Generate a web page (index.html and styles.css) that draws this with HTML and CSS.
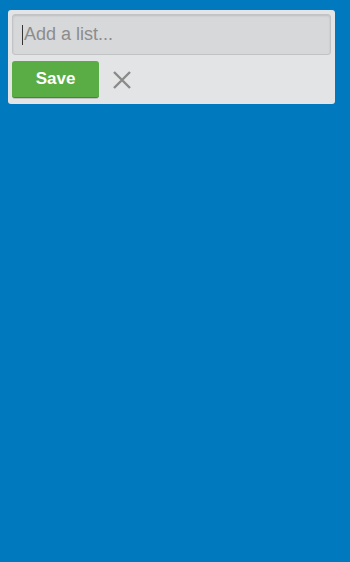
FILE: index.html
```html
<!DOCTYPE html>
<html lang="en">
<head>
<meta charset="utf-8">
<title>Add a list</title>
<link rel="stylesheet" href="styles.css">
</head>
<body>
<div class="board">
  <form class="add-list">
    <div class="list-input"><span class="caret"></span><span class="placeholder">Add a list...</span></div>
    <div class="controls">
      <button type="button" class="save">Save</button>
      <button type="button" class="cancel" aria-label="Cancel">
        <svg width="20" height="20" viewBox="0 0 20 20"><path d="M2 2 L18 18 M18 2 L2 18" stroke="#8a8a8a" stroke-width="2.4" fill="none"/></svg>
      </button>
    </div>
  </form>
</div>
</body>
</html>
```
FILE: styles.css
```css
html, body {
  margin: 0;
  padding: 0;
  height: 100%;
}
body {
  background: #0079bf;
  font-family: "Liberation Sans", Arial, sans-serif;
}
.board {
  padding: 10px 15px 0 8px;
}
.add-list {
  background: #e2e4e6;
  border-radius: 3px;
  padding: 4px 4px 6px 4px;
  display: flex;
  flex-direction: column;
  gap: 6px;
  width: 319px;
}
.list-input {
  box-sizing: border-box;
  height: 41px;
  background: #d7d8da;
  border: 1px solid #c2c3c5;
  border-radius: 3px;
  box-shadow: inset 0 1px 2px rgba(0,0,0,0.12);
  display: flex;
  align-items: center;
  padding-left: 9px;
}
.caret {
  width: 1px;
  height: 20px;
  background: #333;
  margin-right: 1px;
}
.placeholder {
  color: #8c8c8c;
  font-size: 18px;
}
.controls {
  display: flex;
  align-items: center;
  gap: 0;
}
.save {
  box-sizing: border-box;
  width: 87px;
  height: 37px;
  background: #5aac44;
  border: none;
  border-bottom: 1px solid #3f8a2c;
  border-radius: 3px;
  color: #fff;
  font-family: "Liberation Sans", Arial, sans-serif;
  font-weight: bold;
  font-size: 17px;
  padding: 0;
  box-shadow: 0 1px 0 rgba(0,0,0,0.15);
}
.cancel {
  background: none;
  border: none;
  padding: 0;
  margin-left: 13px;
  width: 20px;
  height: 20px;
  display: flex;
}
```
